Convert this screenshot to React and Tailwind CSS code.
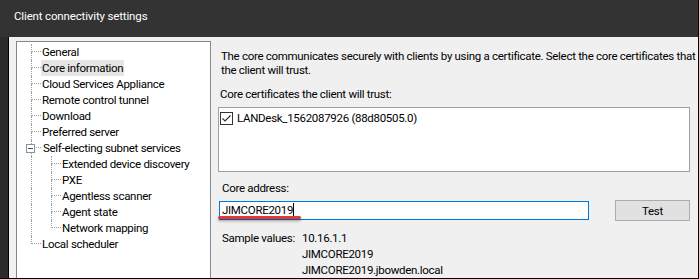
import React from "react";

const font = { fontFamily: 'Roboto, "Liberation Sans", Arial, sans-serif' };

// one connector cell of the tree: vertical dotted line + horizontal stub at row middle
const Branch = ({ last }) => (
  <div className="w-[10px] h-4 flex flex-col shrink-0">
    <div className="h-2 border-l border-b border-dotted border-[#a0a0a0]" />
    {!last && <div className="h-2 border-l border-dotted border-[#a0a0a0]" />}
  </div>
);

const Pass = () => <div className="w-[20px] h-4 shrink-0 border-l border-dotted border-[#a0a0a0]" />;

const Row = ({ children, last, nested, highlight }) => (
  <div className="h-4 flex items-center">
    {nested && <Pass />}
    <Branch last={last} />
    <span className={`px-[1px] leading-4 whitespace-nowrap ${highlight ? "bg-[#e5e5e5]" : ""}`}>{children}</span>
  </div>
);

const Tree = () => (
  <div className="w-[195px] h-[260px] border border-[#828790] bg-white pt-[2px] pl-[14px] text-black shrink-0">
    <Row>General</Row>
    <Row highlight>Core information</Row>
    <Row>Cloud Services Appliance</Row>
    <Row>Remote control tunnel</Row>
    <Row>Download</Row>
    <Row>Preferred server</Row>
    <div className="h-4 flex items-center relative">
      <Branch />
      <div className="absolute left-[-5px] top-[4px] w-[9px] h-[9px] border border-[#919191] bg-white flex items-center justify-center">
        <div className="w-[5px] h-px bg-[#1e4f9a]" />
      </div>
      <span className="px-[1px] leading-4 ml-[1px] whitespace-nowrap">Self-electing subnet services</span>
    </div>
    <Row nested>Extended device discovery</Row>
    <Row nested>PXE</Row>
    <Row nested>Agentless scanner</Row>
    <Row nested>Agent state</Row>
    <Row nested last>Network mapping</Row>
    <Row last>Local scheduler</Row>
  </div>
);

export default function App() {
  return (
    <div className="w-[699px] h-[279px] overflow-hidden border-r border-b border-black bg-[#2b2b2b] flex flex-col" style={font}>
      <div className="h-[37px] shrink-0 bg-[#333333] flex items-center pl-[14px] pb-[3px] text-white text-[11.5px] tracking-[-0.15px]">
        Client connectivity settings
      </div>
      <div className="flex flex-1 min-h-0">
        <div className="w-[8px] bg-[#2b2b2b] shrink-0" />
        <div className="w-px bg-black shrink-0" />
        <div className="flex-1 bg-[#f0f0f0] flex pl-[7px] pt-[4px] text-[11.5px] tracking-[-0.3px] text-black">
          <Tree />
          <div className="flex-1 pl-[7px] pr-[8px] pt-[8px] flex flex-col">
            <p className="leading-[14px] pl-[3px] mr-[-8px]">
              The core communicates securely with clients by using a certificate. Select the core certificates that the client will trust.
            </p>
            <div className="mt-[10px] leading-[14px] pl-[2px]">Core certificates the client will trust:</div>
            <div className="mt-[6px] h-[67px] border border-[#a0a0a0] bg-white pl-[1px] pt-[4px]">
              <div className="flex items-center gap-[4px]">
                <div className="w-[13px] h-[13px] border border-[#333] bg-white flex items-center justify-center">
                  <svg width="11" height="11" viewBox="0 0 11 11">
                    <path d="M1.5 5.5 L4 8 L9.5 2.5" fill="none" stroke="#333" strokeWidth="1.2" />
                  </svg>
                </div>
                <span className="leading-[13px]">LANDesk_1562087926 (88d80505.0)</span>
              </div>
            </div>
            <div className="mt-[9px] leading-[14px] pl-[4px]">Core address:</div>
            <div className="mt-[5px] flex items-center">
              <div className="relative w-[370px] h-[19px] ml-[1px] border border-[#0078d7] bg-white flex items-center pl-[2px] pb-[1px]">
                <span className="leading-[14px]">JIMCORE2019</span>
                <span className="w-px h-[14px] bg-black" />
                <div className="absolute left-[-2px] top-[14px] w-[83px] h-[3px] bg-[#e53935] rounded-full shadow-[0_2px_3px_rgba(0,0,0,0.35)]" />
              </div>
              <button className="ml-[26px] w-[75px] h-[21px] border border-[#adadad] bg-[#e1e1e1] leading-[14px]">
                Test
              </button>
            </div>
            <div className="mt-[9px] flex pl-[4px] leading-[16px]">
              <div className="w-[80px] whitespace-nowrap">Sample values:</div>
              <div className="flex flex-col">
                <span>10.16.1.1</span>
                <span>JIMCORE2019</span>
                <span>JIMCORE2019.jbowden.local</span>
              </div>
            </div>
          </div>
        </div>
      </div>
    </div>
  );
}
